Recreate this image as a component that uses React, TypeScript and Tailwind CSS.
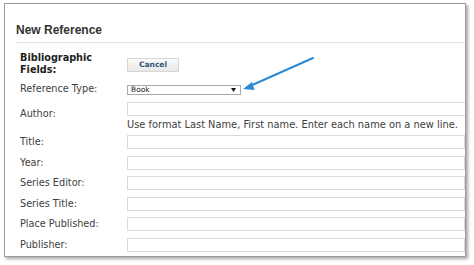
export default function App() {
  const rows = ["Title:", "Year:", "Series Editor:", "Series Title:", "Place Published:", "Publisher:"];
  return (
    <div className="relative w-[474px] h-[265px] bg-white pt-[3px] pl-[4px] font-['DejaVu_Sans',Verdana,sans-serif] text-[#404040]">
      <div className="w-[462px] h-[254px] border border-[#9c9c9c] bg-white shadow-[2px_2px_3px_rgba(0,0,0,0.35)] overflow-hidden">
        <div className="mt-[19px] ml-[11px] h-[14px] leading-[14px] text-[12px] font-bold font-['Liberation_Sans',Arial,sans-serif] text-[#333]">
          New Reference
        </div>
        <div className="mt-[5px] ml-[11px] h-px bg-[#e4e4e4]" />
        <div className="pl-[15px] text-[9.7px]">
          <div className="mt-[9px] flex h-[24px]">
            <div className="w-[107px] shrink-0 font-bold leading-[12px] text-[#222]">
              Bibliographic
              <br />
              Fields:
            </div>
            <div className="mt-[6px] flex h-[14px] w-[52px] items-center justify-center border border-[#d6d6d6] bg-gradient-to-b from-[#fbfbfb] to-[#e9e9e9] text-[7.5px] font-bold text-[#2b5675]">
              Cancel
            </div>
          </div>
          <div className="mt-[7px] flex h-[12px]">
            <div className="w-[107px] shrink-0 leading-[12px]">Reference Type:</div>
            <div className="mt-[2px] flex h-[10px] w-[114px] items-center justify-between border border-[#a9a9a9] bg-white pl-[3px] pr-[4px] text-[7.5px] leading-none text-[#222]">
              <span>Book</span>
              <svg width="5" height="4" viewBox="0 0 5 4">
                <path d="M0 0 L5 0 L2.5 4 Z" fill="#111" />
              </svg>
            </div>
          </div>
          <div className="mt-[7px] flex">
            <div className="w-[107px] shrink-0 pt-[6px] leading-[12px]">Author:</div>
            <div className="flex flex-col">
              <div className="h-[14px] w-[400px] border border-[#d9d9d9] bg-white" />
              <div className="mt-[2px] h-[13px] whitespace-nowrap text-[9.85px] leading-[13px]">
                Use format Last Name, First name. Enter each name on a new line.
              </div>
            </div>
          </div>
          <div className="mt-[4px] flex flex-col gap-[6.6px]">
            {rows.map((r) => (
              <div key={r} className="flex h-[14px] items-center">
                <div className="w-[107px] shrink-0 leading-[12px]">{r}</div>
                <div className="h-[14px] w-[400px] border border-[#d9d9d9] bg-white" />
              </div>
            ))}
          </div>
        </div>
      </div>
      <svg className="absolute left-0 top-0" width="474" height="265" viewBox="0 0 474 265">
        <line x1="313" y1="58" x2="250" y2="86" stroke="#2b8ad6" strokeWidth="2" strokeLinecap="round" />
        <path d="M243 89 L252 82 L254.5 90 Z" fill="#2b8ad6" />
      </svg>
    </div>
  );
}
